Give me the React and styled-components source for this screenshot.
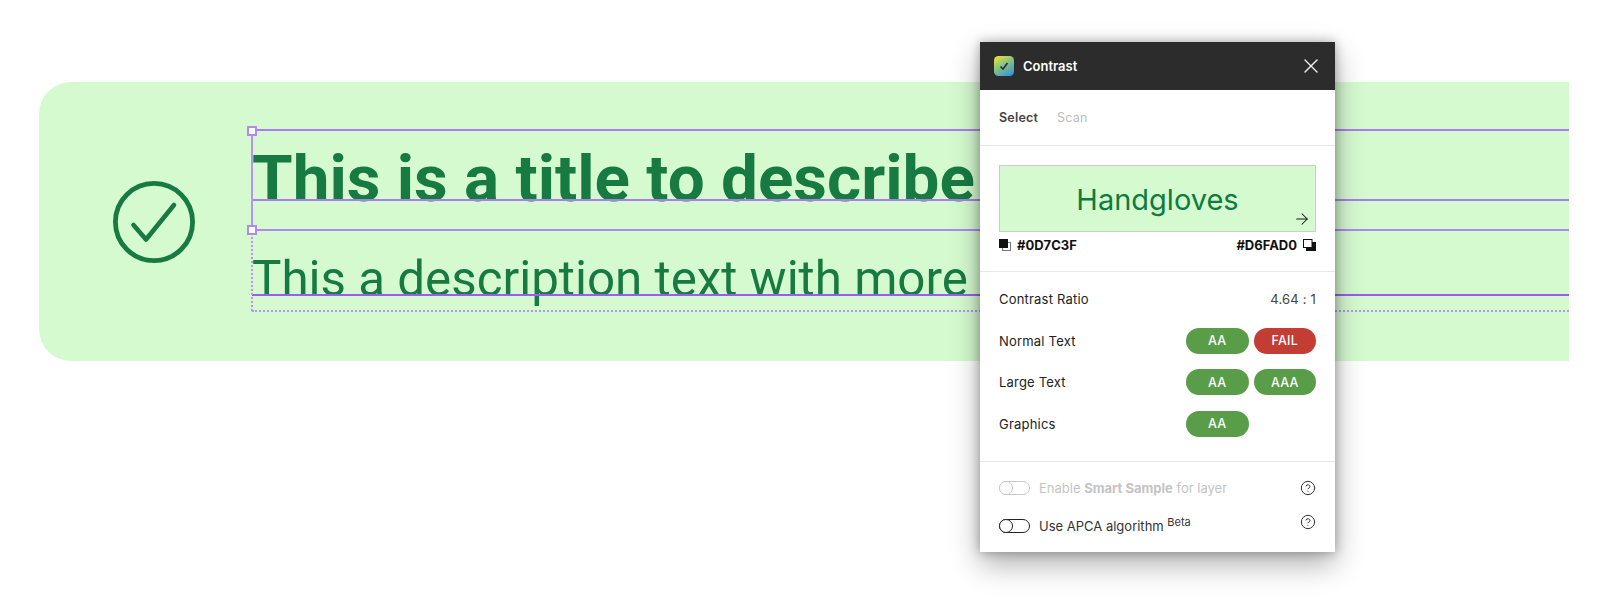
import React from 'react';
import styled, { createGlobalStyle } from 'styled-components';
import { ArrowRight, CircleHelp, X } from 'lucide-react';

const GlobalStyle = createGlobalStyle`
	html, body {
		margin: 0;
		padding: 0;
		background: #fff;
		overflow: hidden;
		font-family: "Inter", "Liberation Sans", sans-serif;
	}
`

const Page = styled.div`
	position: relative;
	width: 1600px;
	height: 615px;
	padding: 82px 31px 0 39px;
	box-sizing: border-box;
	overflow: hidden;
`

const Banner = styled.div`
	position: relative;
	display: flex;
	align-items: center;
	gap: 57px;
	height: 279px;
	padding-left: 74px;
	background: #d6fad0;
	border-radius: 32px 0 0 32px;
	color: #177a41;
	font-family: "Roboto", "Liberation Sans", sans-serif;
`

const TextBlock = styled.div`
	white-space: nowrap;
`

const Title = styled.div`
	font-size: 65.6px;
	font-weight: 700;
	line-height: 95px;
	margin-bottom: 5px;
`

const Description = styled.div`
	font-size: 49.3px;
	font-weight: 400;
	line-height: 65px;
	padding-top: 16px;
`

const Guide = styled.div`
	position: absolute;
	left: 213px;
	right: 0;
	top: ${props => props.$top}px;
	border-top: 2px ${props => props.$line || 'solid'} ${props => props.$color || '#ab7df3'};
`

const GuideVertical = styled.div`
	position: absolute;
	left: 212px;
	top: ${props => props.$top}px;
	height: ${props => props.$height}px;
	border-left: 2px ${props => props.$line || 'solid'} #b892f5;
`

const Handle = styled.div`
	position: absolute;
	left: 208px;
	top: ${props => props.$top}px;
	width: 6px;
	height: 6px;
	background: #fff;
	border: 2px solid #b388f6;
`

const Popup = styled.div`
	position: absolute;
	left: 980px;
	top: 42px;
	width: 355px;
	height: 510px;
	display: flex;
	flex-direction: column;
	background: #fff;
	box-shadow: 0 12px 28px rgba(0, 0, 0, 0.32), 0 0 10px rgba(0, 0, 0, 0.3);
	color: #111;
`

const Header = styled.div`
	display: flex;
	align-items: center;
	gap: 9px;
	height: 48px;
	padding: 0 12px 0 14px;
	background: #2c2c2c;
	color: #fff;
	font-size: 13px;
	font-weight: 600;
	flex: none;
`

const HeaderTitle = styled.span`
	flex: 1;
`

const CloseIcon = styled(X)`
	display: block;
	color: #eee;
`

const Tabs = styled.div`
	display: flex;
	align-items: center;
	gap: 19px;
	height: 55px;
	padding: 0 19px;
	border-bottom: 1px solid #e6e6e6;
	font-size: 12.5px;
	letter-spacing: 0.2px;
	flex: none;
`

const Tab = styled.span`
	font-weight: ${props => (props.$active ? 600 : 400)};
	color: ${props => (props.$active ? '#444' : '#bbb')};
`

const PreviewSection = styled.div`
	height: 126px;
	padding: 19px 19px 0;
	box-sizing: border-box;
	border-bottom: 1px solid #e6e6e6;
	flex: none;
`

const Preview = styled.div`
	position: relative;
	display: flex;
	align-items: center;
	justify-content: center;
	height: 67px;
	padding-top: 2px;
	box-sizing: border-box;
	background: #d6fad0;
	border: 1px solid #ccc;
	color: #0d7c3f;
	font-size: 29px;
	font-weight: 400;
`

const PreviewArrow = styled(ArrowRight)`
	position: absolute;
	right: 4px;
	bottom: 3px;
	color: #111;
`

const HexRow = styled.div`
	display: flex;
	justify-content: space-between;
	margin-top: 5px;
	font-size: 13px;
	font-weight: 700;
`

const Hex = styled.span`
	display: flex;
	align-items: center;
	gap: 6px;
`

const Results = styled.div`
	display: flex;
	flex-direction: column;
	height: 190px;
	padding: 14px 19px 0;
	box-sizing: border-box;
	border-bottom: 1px solid #e6e6e6;
	flex: none;
`

const ResultRow = styled.div`
	display: flex;
	align-items: center;
	justify-content: space-between;
	height: 26px;
	margin-bottom: 15.5px;
	font-size: 13px;
	letter-spacing: 0.2px;
	color: #222;
`

const Ratio = styled.span`
	color: #444;
`

const Pills = styled.div`
	display: grid;
	grid-template-columns: 62.5px 62.5px;
	gap: 5px;
`

const Pill = styled.span`
	display: flex;
	align-items: center;
	justify-content: center;
	height: 26px;
	border-radius: 13px;
	background: ${props => (props.$fail ? '#c43d35' : '#5a9d49')};
	color: #fff;
	font-size: 12.5px;
	font-weight: 500;
`

const Options = styled.div`
	display: flex;
	flex-direction: column;
	gap: 24px;
	padding: 19px 19px 0;
	font-size: 13px;
`

const OptionRow = styled.div`
	display: flex;
	align-items: center;
	gap: 9px;
	height: 14px;
	color: ${props => (props.$disabled ? '#c4c4c4' : '#333')};
`

const OptionLabel = styled.span`
	flex: 1;
	white-space: nowrap;
	b {
		font-weight: 700;
	}
	sup {
		font-size: 11px;
		line-height: 0;
		vertical-align: 5px;
	}
`

const Toggle = styled.span`
	position: relative;
	width: 31px;
	height: 14px;
	box-sizing: border-box;
	border: 1.5px solid ${props => (props.$disabled ? '#c8c8c8' : '#222')};
	border-radius: 7px;
	flex: none;
	&::before {
		content: '';
		position: absolute;
		left: -1.5px;
		top: -1.5px;
		width: 14px;
		height: 14px;
		box-sizing: border-box;
		border: 1.5px solid ${props => (props.$disabled ? '#c8c8c8' : '#222')};
		border-radius: 50%;
		background: #fff;
	}
`

const HelpIcon = styled(CircleHelp)`
	display: block;
	flex: none;
	color: #333;
	position: relative;
	top: ${props => props.$shift || 0}px;
`

const Logo = () => (
	<svg width="20" height="20" viewBox="0 0 20 20">
		<defs>
			<linearGradient id="logoGrad" x1="0.1" y1="0" x2="0.7" y2="1">
				<stop offset="0" stopColor="#f2de3a" />
				<stop offset="0.45" stopColor="#8cc67a" />
				<stop offset="1" stopColor="#3f97d6" />
			</linearGradient>
		</defs>
		<rect width="20" height="20" rx="4.5" fill="url(#logoGrad)" />
		<path d="M6.5 10.5 L9 13 L13.5 7" fill="none" stroke="#2c2c44" strokeWidth="1.6" />
	</svg>
)

const CheckCircle = () => (
	<svg width="82" height="82" viewBox="0 0 82 82" style={{ flex: 'none' }}>
		<circle cx="41" cy="41" r="38.6" fill="none" stroke="#177a41" strokeWidth="4.8" />
		<path d="M20.5 44 L33 58.5 L61 24" fill="none" stroke="#177a41" strokeWidth="4.6" strokeLinecap="round" strokeLinejoin="round" />
	</svg>
)

const SwatchFront = () => (
	<svg width="12" height="12" viewBox="0 0 12 12">
		<rect x="3.5" y="3.5" width="8" height="8" fill="#fff" stroke="#777" />
		<rect x="0" y="0" width="9" height="9" fill="#111" />
	</svg>
)

const SwatchBack = () => (
	<svg width="13" height="12" viewBox="0 0 13 12">
		<rect x="3" y="3" width="10" height="9" fill="#111" />
		<rect x="0.5" y="0.5" width="8.5" height="8" fill="#fff" stroke="#111" />
	</svg>
)

const App = () => {
	return (
		<Page>
			<GlobalStyle />
			<Banner>
				<CheckCircle />
				<TextBlock>
					<Title>This is a title to describe</Title>
					<Description>This a description text with more</Description>
				</TextBlock>
				<Guide $top={47} />
				<Guide $top={117} />
				<Guide $top={147} $color="#ae8aef" />
				<Guide $top={212} $color="#9b5cf5" />
				<Guide $top={228} $line="dotted" $color="#b892f5" />
				<GuideVertical $top={48} $height={100} />
				<GuideVertical $top={148} $height={81} $line="dotted" />
				<Handle $top={44} />
				<Handle $top={143} />
			</Banner>
			<Popup>
				<Header>
					<Logo />
					<HeaderTitle>Contrast</HeaderTitle>
					<CloseIcon size={24} strokeWidth={1.4} />
				</Header>
				<Tabs>
					<Tab $active>Select</Tab>
					<Tab>Scan</Tab>
				</Tabs>
				<PreviewSection>
					<Preview>
						Handgloves
						<PreviewArrow size={18} strokeWidth={1.4} />
					</Preview>
					<HexRow>
						<Hex><SwatchFront />#0D7C3F</Hex>
						<Hex>#D6FAD0<SwatchBack /></Hex>
					</HexRow>
				</PreviewSection>
				<Results>
					<ResultRow>
						Contrast Ratio
						<Ratio>4.64 : 1</Ratio>
					</ResultRow>
					<ResultRow>
						Normal Text
						<Pills>
							<Pill>AA</Pill>
							<Pill $fail>FAIL</Pill>
						</Pills>
					</ResultRow>
					<ResultRow>
						Large Text
						<Pills>
							<Pill>AA</Pill>
							<Pill>AAA</Pill>
						</Pills>
					</ResultRow>
					<ResultRow>
						Graphics
						<Pills>
							<Pill>AA</Pill>
						</Pills>
					</ResultRow>
				</Results>
				<Options>
					<OptionRow $disabled>
						<Toggle $disabled />
						<OptionLabel>Enable <b>Smart Sample</b> for layer</OptionLabel>
						<HelpIcon size={16} strokeWidth={1.5} />
					</OptionRow>
					<OptionRow>
						<Toggle />
						<OptionLabel>Use APCA algorithm <sup>Beta</sup></OptionLabel>
						<HelpIcon size={16} strokeWidth={1.5} $shift={-4} />
					</OptionRow>
				</Options>
			</Popup>
		</Page>
	)
}

export default App;
